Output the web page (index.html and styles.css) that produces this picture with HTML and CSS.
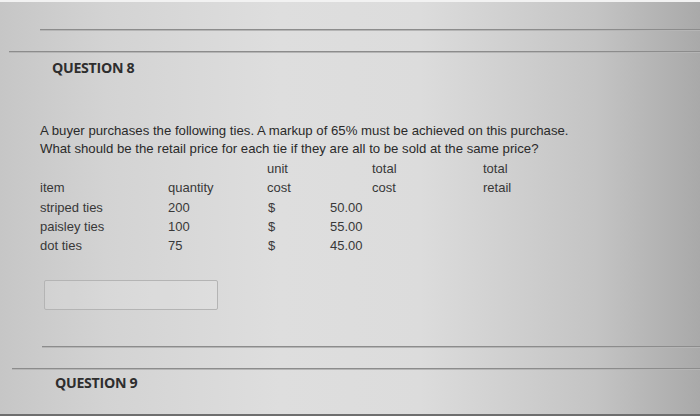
FILE: index.html
```html
<!DOCTYPE html>
<html>
<head>
<meta charset="utf-8">
<link rel="stylesheet" href="styles.css">
</head>
<body>
<div class="page">
  <div class="rule rule-short"></div>
  <div class="rule rule-long"></div>
  <h2 class="qtitle q8">QUESTION 8</h2>
  <p class="prompt">A buyer purchases the following ties. A markup of 65% must be achieved on this purchase.<br>What should be the retail price for each tie if they are all to be sold at the same price?</p>
  <div class="table">
    <span></span><span></span><span>unit</span><span></span><span>total</span><span>total</span>
    <span>item</span><span>quantity</span><span>cost</span><span></span><span>cost</span><span>retail</span>
    <span>striped ties</span><span>200</span><span class="dollar">$</span><span>50.00</span><span></span><span></span>
    <span>paisley ties</span><span>100</span><span class="dollar">$</span><span>55.00</span><span></span><span></span>
    <span>dot ties</span><span>75</span><span class="dollar">$</span><span>45.00</span><span></span><span></span>
  </div>
  <div class="answer"></div>
  <div class="rule rule-short rule-b1"></div>
  <div class="rule rule-long rule-b2"></div>
  <h2 class="qtitle q9">QUESTION 9</h2>
</div>
</body>
</html>
```
FILE: styles.css
```css
html, body {
  margin: 0;
  padding: 0;
  width: 700px;
  height: 416px;
  overflow: hidden;
}
body {
  background: linear-gradient(to right, #c6c6c6 0%, #d3d3d3 15%, #dedede 40%, #dcdcdc 60%, #c4c4c4 85%, #a9a9a9 100%);
  font-family: "Liberation Sans", Arial, sans-serif;
  position: relative;
}
body::before {
  content: "";
  position: absolute;
  left: 0;
  top: 0;
  width: 700px;
  height: 2px;
  background: #f2f2f2;
}
body::after {
  content: "";
  position: absolute;
  left: 0;
  bottom: 0;
  width: 700px;
  height: 2px;
  background: #6e6e6e;
}
.page {
  padding-top: 29px;
}
.rule {
  height: 1px;
  background: #8c8c8c;
  border-bottom: 1px solid #b5b5b5;
}
.rule-short {
  margin-left: 40px;
}
.rule-long {
  margin-left: 9px;
  margin-top: 20px;
}
.qtitle {
  margin: 0;
  font-family: "Open Sans", sans-serif;
  font-weight: 700;
  font-size: 14.2px;
  letter-spacing: -0.3px;
  color: #2e2e2e;
  line-height: 16px;
}
.q8 {
  margin-top: 7px;
  margin-left: 52px;
}
.prompt {
  margin: 46px 0 0 40px;
  font-size: 13.2px;
  line-height: 18px;
  color: #2a2a2a;
  letter-spacing: 0;
}
.table {
  display: grid;
  grid-template-columns: 128px 99px 63px 42px 111px auto;
  grid-auto-rows: 19.3px;
  margin: 1px 0 0 40px;
  font-size: 13px;
  line-height: 19px;
  color: #383838;
}
.dollar {
  padding-left: 1px;
}
.answer {
  margin: 25px 0 0 44px;
  width: 172px;
  height: 28px;
  border: 1px solid #b4b4b4;
  border-radius: 2px;
  background: rgba(255, 255, 255, 0.12);
}
.rule-b1 {
  margin-top: 36px;
  margin-left: 42px;
}
.rule-b2 {
  margin-left: 12px;
  margin-top: 20px;
}
.q9 {
  margin-top: 5px;
  margin-left: 55px;
}
```
